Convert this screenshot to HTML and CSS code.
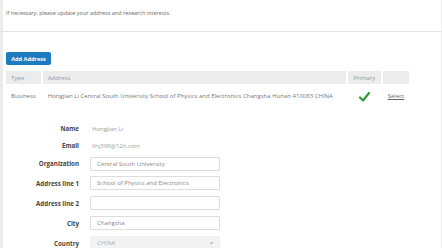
FILE: index.html
```html
<!DOCTYPE html>
<html lang="en">
<head>
  <meta charset="UTF-8" />
  <title>Update Address</title>
  <link rel="stylesheet" href="styles.css">
</head>
<body>
  <div class="page">
    <p class="intro">If necessary, please update your address and research interests.</p>
    <hr class="divider" />

    <button class="btn-add" type="button">Add Address</button>

    <table class="address-table">
      <thead>
        <tr>
          <th class="col-type">Type</th>
          <th class="col-addr">Address</th>
          <th class="col-primary">Primary</th>
          <th class="col-select"></th>
        </tr>
      </thead>
      <tbody>
        <tr>
          <td>Business</td>
          <td>Hongjian Li Central South University School of Physics and Electronics Changsha Hunan 410083 CHINA</td>
          <td class="check">
            <svg width="11" height="10" viewBox="0 0 11 10"><path d="M1 5.5 L4 8.5 L10 1" fill="none" stroke="#2e9e3c" stroke-width="2.2" stroke-linecap="round" stroke-linejoin="round"/></svg>
          </td>
          <td class="select"><a href="#">Select</a></td>
        </tr>
      </tbody>
    </table>

    <form class="addr-form">
      <label>Name</label>
      <span class="value">Hongjian Li</span>

      <label>Email</label>
      <span class="value">lihj398@126.com</span>

      <label>Organization</label>
      <input type="text" value="Central South University" />

      <label>Address line 1</label>
      <input type="text" value="School of Physics and Electronics" />

      <label>Address line 2</label>
      <input type="text" value="" />

      <label>City</label>
      <input type="text" value="Changsha" />

      <label>Country</label>
      <div class="fake-select">CHINA<span class="caret">&#9662;</span></div>
    </form>
  </div>
</body>
</html>
```
FILE: styles.css
```css
* { box-sizing: border-box; }
body {
  margin: 0;
  background: #fff;
  font-family: 'Open Sans', sans-serif;
  color: #555;
  height: 248px;
  overflow: hidden;
}
.page {
  border-left: 3px solid #ececec;
  border-right: 1px solid #f0f0f0;
  min-height: 248px;
  padding: 0 0 0 3px;
}
.intro {
  margin: 0;
  padding-top: 9px;
  font-size: 5.5px;
  line-height: 9px;
  color: #6a6a6a;
}
.divider {
  border: none;
  border-top: 1px solid #e4e4e4;
  margin: 13px -6px 0 -6px;
}
.btn-add {
  display: block;
  margin-top: 20px;
  width: 45px;
  height: 13px;
  padding: 0;
  border: none;
  border-radius: 2px;
  background: #1d7cc0;
  color: #fff;
  font-family: inherit;
  font-weight: 700;
  font-size: 5.6px;
}
.address-table {
  margin-top: 4px;
  margin-left: -2px;
  border-collapse: separate;
  border-spacing: 2px;
  font-size: 6px;
}
.address-table th {
  background: #ececec;
  color: #999;
  font-weight: 400;
  text-align: left;
  height: 13px;
  padding: 0 5px;
}
.col-type { width: 34px; }
.col-addr { width: 303px; }
.col-primary { width: 33px; text-align: center !important; }
.col-select { width: 26px; }
.address-table td {
  height: 20px;
  padding: 0 5px;
  color: #777;
  white-space: nowrap;
}
.address-table td.check {
  text-align: center;
  padding-top: 3px;
}
.address-table td.select a {
  color: #666;
  text-decoration: underline;
}
.addr-form {
  display: grid;
  grid-template-columns: 73px 130px;
  grid-auto-rows: 20px;
  grid-template-rows: 17px 17px 19px;
  column-gap: 11px;
  align-items: center;
  margin-top: 12px;
}
.addr-form label {
  text-align: right;
  font-weight: 700;
  font-size: 6.2px;
  color: #444;
}
.addr-form .value {
  font-size: 6px;
  color: #a0a0a0;
  padding-left: 2px;
}
.addr-form input,
.fake-select {
  height: 14px;
  border: 1px solid #ddd;
  border-radius: 1px;
  padding: 0 6px;
  font-family: inherit;
  font-size: 6px;
  color: #888;
  background: #fff;
}
.fake-select {
  display: flex;
  align-items: center;
  justify-content: space-between;
  background: #f3f3f3;
  border-color: #f0f0f0;
  color: #aaa;
}
.caret {
  font-size: 6px;
  color: #bbb;
}
```
